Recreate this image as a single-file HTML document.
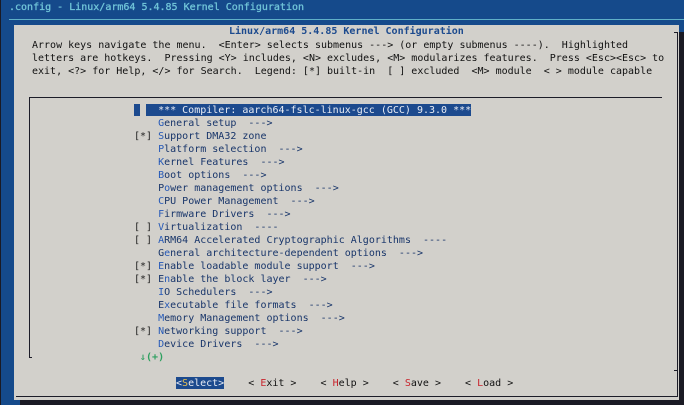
<!DOCTYPE html>
<html><head><style>
*{margin:0;padding:0}
body{width:684px;height:405px;background:#1a1a24;position:relative;overflow:hidden;font-family:"DejaVu Sans Mono","Liberation Mono",monospace;font-size:10px}
.bg{position:absolute;left:1px;top:0;width:683px;height:405px;background:#154a8b}
.t{position:absolute;white-space:pre;line-height:13px}
.dlg{position:absolute;left:14px;top:25px;width:665px;height:375px;background:#d2d0cb}
.shr{position:absolute;left:679px;top:32px;width:5px;height:373px;background:#1a1a24}
.shb{position:absolute;left:20px;top:400px;width:664px;height:5px;background:#1a1a24}
.ln{position:absolute;background:#1c1c28}
.m{color:#18356a}
.h{color:#2559b8}
.k{color:#222}
.r{color:#c8242c}
</style></head><body>
<div class="bg"></div>
<div class="t" style="left:9px;top:1px;color:#70c4d8;-webkit-text-stroke:0.3px #70c4d8">.config - Linux/arm64 5.4.85 Kernel Configuration</div>
<div class="ln" style="left:9px;top:19px;width:675px;height:1px;background:#5fb0c8"></div>
<div class="shr"></div><div class="shb"></div>
<div class="dlg"></div>
<div class="ln" style="left:677px;top:32px;width:1px;height:365px"></div>
<div class="ln" style="left:674px;top:32px;width:4px;height:1px"></div>
<div class="ln" style="left:16px;top:396px;width:662px;height:1px"></div>
<div class="ln" style="left:674px;top:370px;width:4px;height:1px"></div>
<div class="t" style="left:229px;top:25px;color:#1c4a8e;font-weight:bold">Linux/arm64 5.4.85 Kernel Configuration</div>
<div class="t" style="left:32px;top:39px;color:#111">Arrow keys navigate the menu.  &lt;Enter&gt; selects submenus ---&gt; (or empty submenus ----).  Highlighted
letters are hotkeys.  Pressing &lt;Y&gt; includes, &lt;N&gt; excludes, &lt;M&gt; modularizes features.  Press &lt;Esc&gt;&lt;Esc&gt; to
exit, &lt;?&gt; for Help, &lt;/&gt; for Search.  Legend: [*] built-in  [ ] excluded  &lt;M&gt; module  &lt; &gt; module capable</div>
<div class="ln" style="left:29px;top:97px;width:633px;height:1px"></div>
<div class="ln" style="left:29px;top:97px;width:1px;height:261px"></div>
<div class="ln" style="left:29px;top:357px;width:3px;height:1px"></div>
<div style="position:absolute;left:134px;top:104px;width:6px;height:12px;background:#1c4a8e"></div>
<div style="position:absolute;left:146px;top:104px;width:325px;height:12px;background:#1c4a8e"></div>
<div class="t" style="left:134px;top:104px;color:#111"><span style="color:#e8ecf4">    *** Compiler: aarch64-fslc-linux-gcc (GCC) 9.3.0 ***</span>
<span class="m">    <span class="h">G</span>eneral setup  ---&gt;</span>
<span class="k">[*]</span><span class="m"> <span class="h">S</span>upport DMA32 zone</span>
<span class="m">    <span class="h">P</span>latform selection  ---&gt;</span>
<span class="m">    <span class="h">K</span>ernel Features  ---&gt;</span>
<span class="m">    <span class="h">B</span>oot options  ---&gt;</span>
<span class="m">    P<span class="h">o</span>wer management options  ---&gt;</span>
<span class="m">    <span class="h">C</span>PU Power Management  ---&gt;</span>
<span class="m">    <span class="h">F</span>irmware Drivers  ---&gt;</span>
<span class="k">[ ]</span><span class="m"> <span class="h">V</span>irtualization  ----</span>
<span class="k">[ ]</span><span class="m"> <span class="h">A</span>RM64 Accelerated Cryptographic Algorithms  ----</span>
<span class="m">    G<span class="h">e</span>neral architecture-dependent options  ---&gt;</span>
<span class="k">[*]</span><span class="m"> <span class="h">E</span>nable loadable module support  ---&gt;</span>
<span class="k">[*]</span><span class="m"> E<span class="h">n</span>able the block layer  ---&gt;</span>
<span class="m">    <span class="h">I</span>O Schedulers  ---&gt;</span>
<span class="m">    E<span class="h">x</span>ecutable file formats  ---&gt;</span>
<span class="m">    <span class="h">M</span>emory Management options  ---&gt;</span>
<span class="k">[*]</span><span class="m"> <span class="h">N</span>etworking support  ---&gt;</span>
<span class="m">    <span class="h">D</span>evice Drivers  ---&gt;</span>
<span style="color:#2fa060;font-weight:bold"> ⇓(+)</span></div>
<div style="position:absolute;left:176px;top:377px;width:48px;height:12px;background:#1c4a8e"></div>
<div class="t" style="left:176px;top:377px;color:#111"><span style="color:#e8ecf4">&lt;<span style="color:#e8c050">S</span>elect&gt;</span>    &lt; <span class="r">E</span>xit &gt;    &lt; <span class="r">H</span>elp &gt;    &lt; <span class="r">S</span>ave &gt;    &lt; <span class="r">L</span>oad &gt;</div>
</body></html>
